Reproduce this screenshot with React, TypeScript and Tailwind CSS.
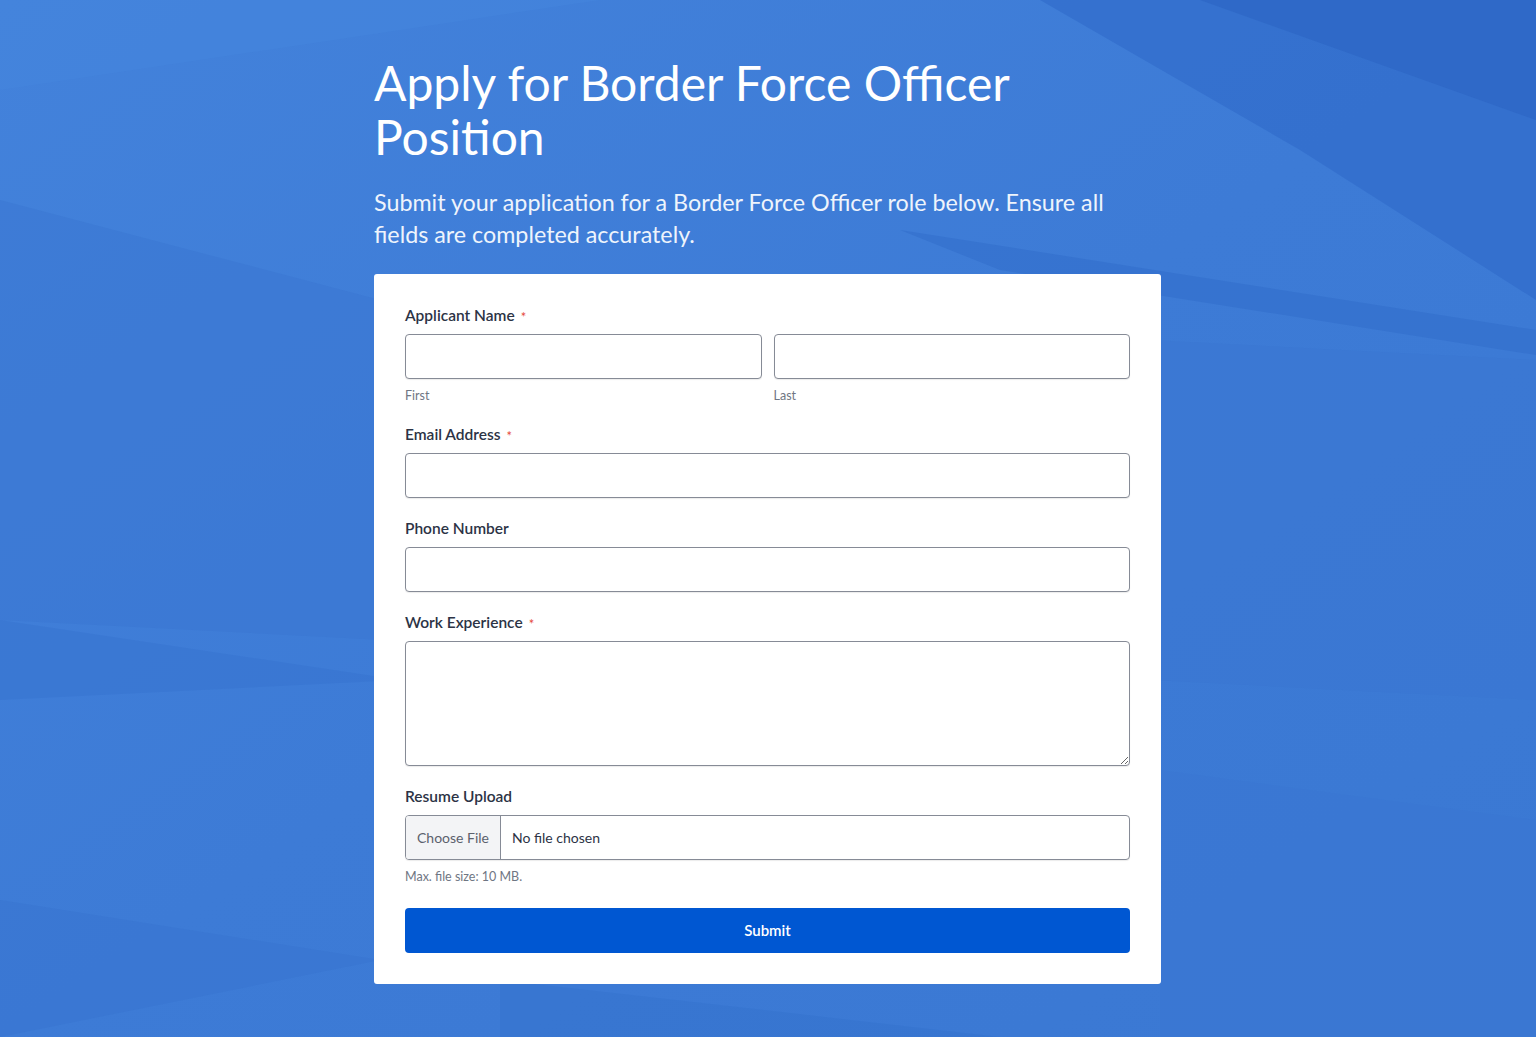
import React from "react";

function Label({ text, required }: { text: string; required?: boolean }) {
  return (
    <label className="flex items-center text-[15.5px] leading-5 font-semibold text-[#2c3345]">
      {text}
      {required && <span className="ml-[6px] mt-[4px] text-[13px] leading-3 font-normal text-[#e5493a]">*</span>}
    </label>
  );
}

const inputCls =
  "block h-[45px] w-full rounded-[4px] border border-[#868b96] bg-white px-3 text-[15px] shadow-[0_1px_1px_rgba(0,0,0,0.08)] outline-none";

function Backdrop() {
  return (
    <svg className="absolute inset-0 h-full w-full" viewBox="0 0 1536 1037" preserveAspectRatio="none">
      <defs>
        <linearGradient id="bg" x1="0" y1="0" x2="1" y2="1">
          <stop offset="0" stopColor="#4382db" />
          <stop offset="0.5" stopColor="#3d7bd6" />
          <stop offset="1" stopColor="#3a78d3" />
        </linearGradient>
      </defs>
      <rect width="1536" height="1037" fill="url(#bg)" />
      <polygon points="1040,0 1536,0 1536,300 1300,150" fill="#2d68c8" opacity="0.55" />
      <polygon points="1200,0 1536,0 1536,120" fill="#2a62c2" opacity="0.5" />
      <polygon points="0,200 380,300 1536,360 1536,700 0,620" fill="#3a76d1" opacity="0.5" />
      <polygon points="900,230 1536,330 1536,355 1000,270" fill="#2f6bca" opacity="0.5" />
      <polygon points="0,620 400,680 0,700" fill="#3570cd" opacity="0.4" />
      <polygon points="1160,770 1536,820 1536,1037 1160,1037" fill="#3a76d2" opacity="0.6" />
      <polygon points="0,900 380,960 0,1037" fill="#3873cf" opacity="0.5" />
      <polygon points="500,980 1000,1037 500,1037" fill="#3470cc" opacity="0.45" />
      <polygon points="0,0 600,0 0,90" fill="#4787de" opacity="0.4" />
    </svg>
  );
}

export default function App() {
  return (
    <div
      className="relative min-h-[1037px] w-full overflow-hidden"
      style={{ fontFamily: "Lato, 'Noto Sans', sans-serif" }}
    >
      <Backdrop />
      <div className="relative ml-[374px] w-[787px] pt-[56px] pb-[53px]">
        <h1 className="text-[48px] leading-[54px] font-normal text-white">
          Apply for Border Force Officer Position
        </h1>
        <p className="mt-[22px] text-[23.3px] leading-[32px] text-[#eef4fc]">
          Submit your application for a Border Force Officer role below. Ensure all fields are completed accurately.
        </p>

        <form className="mt-[24px] rounded-[3px] bg-white px-[31px] pt-[31px] pb-[31px]">
          <Label text="Applicant Name" required />
          <div className="mt-[9px] grid grid-cols-2 gap-3">
            <div>
              <input className={inputCls} />
              <div className="mt-[9px] text-[12.5px] leading-4 text-[#6f7683]">First</div>
            </div>
            <div>
              <input className={inputCls} />
              <div className="mt-[9px] text-[12.5px] leading-4 text-[#6f7683]">Last</div>
            </div>
          </div>

          <div className="mt-5">
            <Label text="Email Address" required />
            <input type="email" className={`mt-[9px] ${inputCls}`} />
          </div>

          <div className="mt-5">
            <Label text="Phone Number" />
            <input type="tel" className={`mt-[9px] ${inputCls}`} />
          </div>

          <div className="mt-5">
            <Label text="Work Experience" required />
            <textarea className="mt-[9px] block h-[125px] w-full rounded-[4px] border border-[#868b96] bg-white px-3 py-2 text-[15px] shadow-[0_1px_1px_rgba(0,0,0,0.08)] outline-none" />
          </div>

          <div className="mt-5">
            <Label text="Resume Upload" />
            <label className="mt-[9px] flex h-[45px] w-full overflow-hidden rounded-[4px] border border-[#868b96] bg-white shadow-[0_1px_1px_rgba(0,0,0,0.08)]">
              <span className="flex w-[95px] items-center justify-center border-r border-[#868b96] bg-[#f3f4f6] text-[14px] text-[#5b616d]">
                Choose File
              </span>
              <span className="flex items-center pl-[11px] text-[14px] text-[#2c3345]">No file chosen</span>
              <input type="file" className="hidden" />
            </label>
            <div className="mt-[9px] text-[12.5px] leading-4 text-[#6f7683]">Max. file size: 10 MB.</div>
          </div>

          <button
            type="button"
            className="mt-[23px] flex h-[45px] w-full items-center justify-center rounded-[4px] bg-[#0057d2] text-[15px] font-semibold text-white"
          >
            Submit
          </button>
        </form>
      </div>
    </div>
  );
}
